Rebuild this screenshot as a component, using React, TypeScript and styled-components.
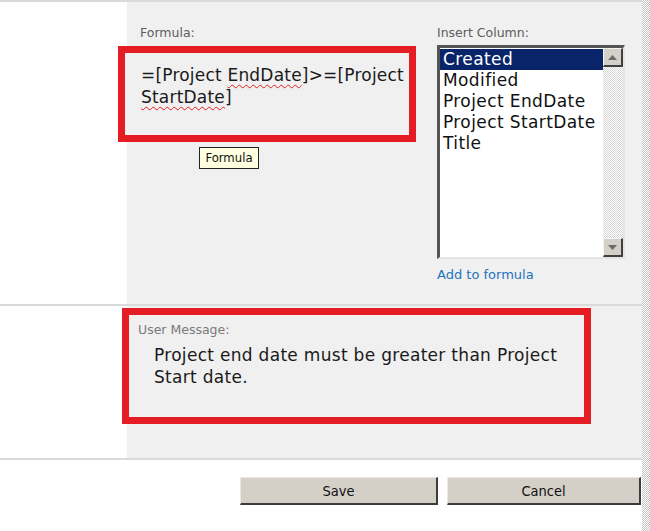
import styled, { createGlobalStyle } from "styled-components";

const GlobalStyle = createGlobalStyle`
  html, body {
    margin: 0;
    padding: 0;
    background: #fff;
    font-family: "DejaVu Sans", Verdana, sans-serif;
  }
`;

const Page = styled.div`
  display: grid;
  grid-template-columns: 1fr 8px;
  width: 650px;
  height: 531px;
  overflow: hidden;
`;

const Main = styled.div`
  display: flex;
  flex-direction: column;
  border-top: 2px solid #dadada;
`;

const HatchStrip = styled.div`
  background-color: #fff;
  background-image: repeating-conic-gradient(#c4c4c4 0 25%, #fff 0 50%);
  background-size: 2px 2px;
`;

const Section = styled.div<{ $height: number }>`
  display: grid;
  grid-template-columns: 127px 1fr;
  height: ${(p) => p.$height}px;
  border-bottom: 2px solid #dadada;
`;

const Side = styled.div`
  background: #fff;
`;

const Panel = styled.div<{ $pad: string }>`
  display: flex;
  align-items: flex-start;
  padding: ${(p) => p.$pad};
  background: #f0f0f0;
`;

const FormulaColumn = styled.div`
  position: relative;
  display: flex;
  flex-direction: column;
  width: 276px;
  margin-right: 21px;
`;

const Label = styled.div<{ $color?: string }>`
  font-size: 12.5px;
  line-height: 15px;
  color: ${(p) => p.$color || "#5c5c5c"};
`;

const RedFrame = styled.div<{ $w: number; $h: number; $ml: number; $mt: number }>`
  box-sizing: border-box;
  width: ${(p) => p.$w}px;
  height: ${(p) => p.$h}px;
  margin: ${(p) => p.$mt}px 0 0 ${(p) => p.$ml}px;
  border: 7px solid #e41d25;
  background: #f0f0f0;
`;

const FormulaText = styled.div`
  padding: 11px 0 0 16px;
  font-size: 17px;
  line-height: 22px;
  letter-spacing: 0.2px;
  white-space: nowrap;
  color: #1a1a1a;
`;

const Squiggle = styled.span`
  text-decoration: underline wavy #e02020;
  text-decoration-thickness: 1px;
  text-underline-offset: 3px;
`;

const Tooltip = styled.div`
  position: absolute;
  left: 59px;
  top: 122px;
  box-sizing: border-box;
  width: 60px;
  height: 22px;
  border: 1px solid #222;
  background: #ffffe1;
  font-family: "DejaVu Sans Condensed", "DejaVu Sans", sans-serif;
  font-size: 13px;
  line-height: 20px;
  text-align: center;
  color: #111;
`;

const InsertColumn = styled.div`
  display: flex;
  flex-direction: column;
`;

const ListBox = styled.div`
  box-sizing: border-box;
  display: grid;
  grid-template-columns: 1fr 20px;
  width: 188px;
  height: 214px;
  margin-top: 5px;
  border-style: solid;
  border-width: 3px 2px 2px 3px;
  border-color: #555 #e4e4e4 #e4e4e4 #555;
  background: #fff;
`;

const Items = styled.div`
  display: flex;
  flex-direction: column;
  padding-top: 1px;
  overflow: hidden;
`;

const Item = styled.div<{ $selected?: boolean }>`
  padding-left: 3px;
  font-size: 17px;
  line-height: 21px;
  letter-spacing: 0.4px;
  white-space: nowrap;
  color: ${(p) => (p.$selected ? "#fff" : "#111")};
  background: ${(p) => (p.$selected ? "#0a246a" : "transparent")};
`;

const ScrollTrack = styled.div`
  display: flex;
  flex-direction: column;
  justify-content: space-between;
  background-color: #fff;
  background-image: repeating-conic-gradient(#d6d6d6 0 25%, #fff 0 50%);
  background-size: 2px 2px;
`;

const ScrollButton = styled.div`
  display: flex;
  align-items: center;
  justify-content: center;
  box-sizing: border-box;
  height: 19px;
  background: #d4d0c8;
  border-style: solid;
  border-width: 1px 2px 2px 1px;
  border-color: #f4f4f4 #404040 #404040 #f4f4f4;
`;

const Link = styled.a`
  margin-top: 8px;
  font-size: 13px;
  line-height: 16px;
  color: #1e73be;
  text-decoration: none;
`;

const MessageLabel = styled(Label)`
  padding: 7px 0 0 9px;
`;

const MessageText = styled.div`
  margin: 7px 0 0 25px;
  font-size: 17px;
  line-height: 22px;
  letter-spacing: 0.3px;
  white-space: nowrap;
  color: #1a1a1a;
`;

const Footer = styled.div`
  display: flex;
  justify-content: flex-end;
  gap: 9px;
  padding: 17px 1px 0 0;
`;

const Button = styled.button<{ $w: number }>`
  box-sizing: border-box;
  width: ${(p) => p.$w}px;
  height: 28px;
  padding: 0;
  background: #d4d0c8;
  border-style: solid;
  border-width: 1px 2px 2px 1px;
  border-color: #ece9e4 #3c3c3c #3c3c3c #ece9e4;
  font-family: "DejaVu Sans Condensed", "DejaVu Sans", sans-serif;
  font-size: 14.5px;
  color: #111;
`;

const Arrow = ({ up }: { up?: boolean }) => (
  <svg width="9" height="5" viewBox="0 0 9 5">
    <polygon points={up ? "0,5 9,5 4.5,0" : "0,0 9,0 4.5,5"} fill="#6a6a6a" />
  </svg>
);

const columns = ["Created", "Modified", "Project EndDate", "Project StartDate", "Title"];

export default function App() {
  return (
    <Page>
      <GlobalStyle />
      <Main>
        <Section $height={302}>
          <Side />
          <Panel $pad="23px 0 0 13px">
            <FormulaColumn>
              <Label>Formula:</Label>
              <RedFrame $w={298} $h={96} $ml={-22} $mt={6}>
                <FormulaText>
                  =[Project <Squiggle>EndDate</Squiggle>]&gt;=[Project
                  <br />
                  <Squiggle>StartDate</Squiggle>]
                </FormulaText>
              </RedFrame>
              <Tooltip>Formula</Tooltip>
            </FormulaColumn>
            <InsertColumn>
              <Label>Insert Column:</Label>
              <ListBox>
                <Items>
                  {columns.map((c, i) => (
                    <Item key={c} $selected={i === 0}>
                      {c}
                    </Item>
                  ))}
                </Items>
                <ScrollTrack>
                  <ScrollButton>
                    <Arrow up />
                  </ScrollButton>
                  <ScrollButton>
                    <Arrow />
                  </ScrollButton>
                </ScrollTrack>
              </ListBox>
              <Link href="#">Add to formula</Link>
            </InsertColumn>
          </Panel>
        </Section>
        <Section $height={152}>
          <Side />
          <Panel $pad="2px 0 0 0">
            <RedFrame $w={469} $h={116} $ml={-5} $mt={0}>
              <MessageLabel $color="#7a7a7a">User Message:</MessageLabel>
              <MessageText>
                Project end date must be greater than Project
                <br />
                Start date.
              </MessageText>
            </RedFrame>
          </Panel>
        </Section>
        <Footer>
          <Button $w={198}>Save</Button>
          <Button $w={194}>Cancel</Button>
        </Footer>
      </Main>
      <HatchStrip />
    </Page>
  );
}
